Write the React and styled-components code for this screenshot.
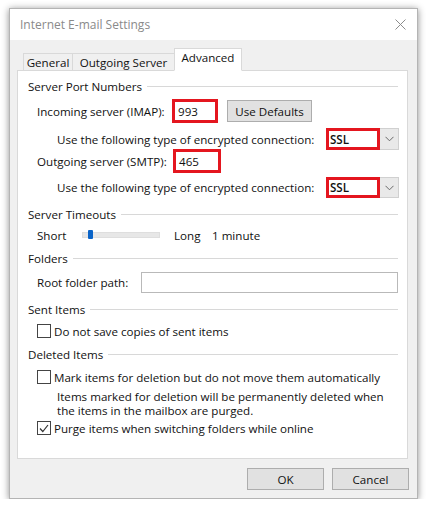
import React from 'react';
import styled, { createGlobalStyle } from 'styled-components';

const Global = createGlobalStyle`
  html, body {
    margin: 0;
    padding: 0;
    background: #ffffff;
  }
  body {
    font-family: "Open Sans", "Noto Sans", sans-serif;
    font-size: 11.6px;
    color: #111;
  }
`;

const Dialog = styled.div`
  margin: 8px 0 0 9px;
  width: 409px;
  height: 491px;
  box-sizing: border-box;
  border: 1px solid #b4b4b4;
  box-shadow: 0 1px 7px rgba(0, 0, 0, 0.45);
  background: #f0f0f0;
  display: flex;
  flex-direction: column;
`;

const TitleBar = styled.div`
  height: 31px;
  background: #fff;
  display: flex;
  align-items: center;
  justify-content: space-between;
  padding: 0 11px 0 10px;
`;

const Title = styled.span`
  font-size: 12px;
  color: #8a8a8a;
`;

const Body = styled.div`
  flex: 1;
  padding: 8px 9px 0 7px;
  display: flex;
  flex-direction: column;
`;

const Tabs = styled.div`
  display: flex;
  align-items: flex-end;
  height: 23px;
  padding-left: 7px;
  position: relative;
  z-index: 1;
  margin-bottom: -1px;
`;

const Tab = styled.div`
  box-sizing: border-box;
  width: ${p => p.$w}px;
  height: ${p => (p.$active ? '23px' : '18px')};
  padding-bottom: ${p => (p.$active ? '4px' : '0')};
  display: flex;
  align-items: center;
  justify-content: center;
  background: ${p => (p.$active ? '#fff' : '#f0f0f0')};
  border: 1px solid #d9d9d9;
  border-bottom: ${p => (p.$active ? '1px solid #fff' : '1px solid #d9d9d9')};
  margin-left: -1px;
  font-size: 11.6px;
`;

const Panel = styled.div`
  height: 389px;
  box-sizing: border-box;
  background: #fff;
  border: 1px solid #d9d9d9;
  padding: 7px 9px 0 10px;
  display: flex;
  flex-direction: column;
`;

const Header = styled.div`
  display: flex;
  align-items: center;
  height: 16px;
  margin-top: ${p => p.$top || 0}px;
  &::after {
    content: '';
    flex: 1;
    height: 1px;
    background: #d8d8d8;
    margin-left: 5px;
  }
`;

const Row = styled.div`
  display: flex;
  align-items: center;
  height: ${p => p.$h || 18}px;
  margin-top: ${p => p.$top || 0}px;
  padding-left: ${p => p.$indent ?? 9}px;
`;

const Label = styled.span`
  width: ${p => (p.$w ? `${p.$w}px` : 'auto')};
  flex: none;
  white-space: nowrap;
`;

const PortBox = styled.div`
  box-sizing: border-box;
  width: ${p => p.$w || 46}px;
  height: 24px;
  border: 3px solid #e4161f;
  background: #fff;
  display: flex;
  align-items: center;
  padding-left: 3px;
`;

const Button = styled.div`
  box-sizing: border-box;
  width: ${p => p.$w}px;
  height: ${p => p.$h || 22}px;
  margin-left: ${p => p.$ml || 0}px;
  background: #e1e1e1;
  border: 1px solid #adadad;
  display: flex;
  align-items: center;
  justify-content: center;
`;

const Combo = styled.div`
  margin-left: auto;
  margin-right: -1px;
  display: flex;
  align-items: stretch;
  height: 100%;
`;

const ComboValue = styled.div`
  box-sizing: border-box;
  width: 54px;
  border: 3px solid #e4161f;
  background: #fff;
  display: flex;
  align-items: center;
  padding-left: 1px;
  font-weight: 600;
`;

const ComboArrow = styled.div`
  box-sizing: border-box;
  width: 19px;
  background: #e9e9e9;
  border: 1px solid #d0d0d0;
  border-left: none;
  display: flex;
  align-items: center;
  justify-content: center;
`;

const Track = styled.div`
  position: relative;
  width: 76px;
  height: 4px;
  background: #e7e7e7;
  border: 1px solid #dedede;
  margin-right: 14px;
`;

const Thumb = styled.div`
  position: absolute;
  left: 5px;
  top: -3px;
  width: 5px;
  height: 9px;
  border-radius: 1px;
  background: #0a64c8;
`;

const TextInput = styled.div`
  box-sizing: border-box;
  flex: 1;
  height: 21px;
  border: 1px solid #b9b9b9;
  background: #fff;
`;

const Box = styled.div`
  box-sizing: border-box;
  width: 14px;
  height: 14px;
  border: 1px solid #444;
  background: #fff;
  margin-right: 3px;
  display: flex;
  align-items: center;
  justify-content: center;
`;

const Note = styled.div`
  margin-top: 4px;
  padding-left: 29px;
  line-height: 14px;
`;

const Footer = styled.div`
  display: flex;
  justify-content: flex-end;
  padding-top: 9px;
  margin-right: -1px;
`;

const Chevron = () => (
  <svg width="9" height="6" viewBox="0 0 9 6">
    <path d="M0.5 0.8 L4.5 4.8 L8.5 0.8" fill="none" stroke="#6a6a6a" strokeWidth="1" />
  </svg>
);

const Close = () => (
  <svg width="11" height="11" viewBox="0 0 11 11">
    <path d="M0.5 0.5 L10.5 10.5 M10.5 0.5 L0.5 10.5" stroke="#8c8c8c" strokeWidth="1" />
  </svg>
);

const Check = () => (
  <svg width="10" height="9" viewBox="0 0 10 9">
    <path d="M1 4.5 L3.8 7.5 L9 1" fill="none" stroke="#333" strokeWidth="1.2" />
  </svg>
);

const Checkbox = ({ checked, children, top }) => (
  <Row $top={top} $h={18}>
    <Box>{checked && <Check />}</Box>
    <Label>{children}</Label>
  </Row>
);

const EncRow = ({ top, h }) => (
  <Row $top={top} $h={h} $indent={29}>
    <Label>Use the following type of encrypted connection:</Label>
    <Combo>
      <ComboValue>SSL</ComboValue>
      <ComboArrow><Chevron /></ComboArrow>
    </Combo>
  </Row>
);

export default function App() {
  return (
    <>
      <Global />
      <Dialog>
        <TitleBar>
          <Title>Internet E-mail Settings</Title>
          <Close />
        </TitleBar>
        <Body>
          <Tabs>
            <Tab $w={50}>General</Tab>
            <Tab $w={103}>Outgoing Server</Tab>
            <Tab $w={68} $active>Advanced</Tab>
          </Tabs>
          <Panel>
            <Header>Server Port Numbers</Header>
            <Row $top={4} $h={26}>
              <Label $w={135}>Incoming server (IMAP):</Label>
              <PortBox>993</PortBox>
              <Button $w={85} $h={22} $ml={9}>Use Defaults</Button>
            </Row>
            <EncRow top={4} h={22} />
            <Row $top={-1} $h={24}>
              <Label $w={136}>Outgoing server (SMTP):</Label>
              <PortBox $w={48}>465</PortBox>
            </Row>
            <EncRow top={4} h={21} />
            <Header $top={8}>Server Timeouts</Header>
            <Row $top={4}>
              <Label $w={45}>Short</Label>
              <Track><Thumb /></Track>
              <Label $w={38}>Long</Label>
              <Label>1 minute</Label>
            </Row>
            <Header $top={6}>Folders</Header>
            <Row $top={5} $h={22}>
              <Label $w={104}>Root folder path:</Label>
              <TextInput />
            </Row>
            <Header $top={8}>Sent Items</Header>
            <Checkbox top={5}>Do not save copies of sent items</Checkbox>
            <Header $top={6}>Deleted Items</Header>
            <Checkbox top={6}>Mark items for deletion but do not move them automatically</Checkbox>
            <Note>
              Items marked for deletion will be permanently deleted when
              <br />
              the items in the mailbox are purged.
            </Note>
            <Checkbox top={1} checked>Purge items when switching folders while online</Checkbox>
          </Panel>
          <Footer>
            <Button $w={77}>OK</Button>
            <Button $w={77} $ml={8}>Cancel</Button>
          </Footer>
        </Body>
      </Dialog>
    </>
  );
}
